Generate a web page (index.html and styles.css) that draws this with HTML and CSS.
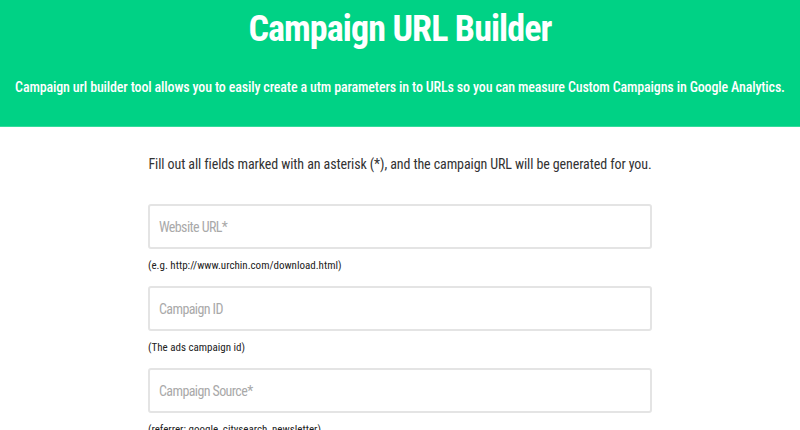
FILE: index.html
```html
<!DOCTYPE html>
<html>
<head>
<meta charset="utf-8">
<link rel="stylesheet" href="styles.css">
</head>
<body>
<header class="hero">
  <h1 class="hero-title">Campaign URL Builder</h1>
  <p class="hero-sub">Campaign url builder tool allows you to easily create a utm parameters in to URLs so you can measure Custom Campaigns in Google Analytics.</p>
</header>
<main class="form-wrap">
  <p class="intro"><span>Fill out all fields marked with an asterisk (*), and the campaign URL will be generated for you.</span></p>
  <div class="field">
    <input class="field-input" type="text" placeholder="Website URL*">
    <div class="field-help">(e.g. http://www.urchin.com/download.html)</div>
  </div>
  <div class="field">
    <input class="field-input" type="text" placeholder="Campaign ID">
    <div class="field-help">(The ads campaign id)</div>
  </div>
  <div class="field">
    <input class="field-input" type="text" placeholder="Campaign Source*">
    <div class="field-help">(referrer: google, citysearch, newsletter)</div>
  </div>
</main>
</body>
</html>
```
FILE: styles.css
```css
html, body {
  margin: 0;
  padding: 0;
  background: #fff;
  font-family: Roboto, "Liberation Sans", sans-serif;
  font-stretch: condensed;
}
.hero {
  background: #00d285;
  color: #fff;
  text-align: center;
  height: 127px;
  box-sizing: border-box;
  padding-top: 8px;
  border-bottom: 1px solid #33dc9c;
}
.hero-title {
  margin: 0;
  font-size: 36px;
  font-weight: 700;
  line-height: 42px;
  letter-spacing: -0.9px;
}
.hero-sub {
  margin: 28px 0 0;
  font-size: 14px;
  font-weight: 500;
  line-height: 18px;
  letter-spacing: -0.15px;
}
.form-wrap {
  width: 504px;
  margin: 0 auto;
  padding-top: 28px;
}
.intro {
  display: flex;
  justify-content: center;
  white-space: nowrap;
  margin: 0 0 31px;
  font-size: 14px;
  line-height: 18px;
  color: #333;
  letter-spacing: -0.1px;
}
.field {
  margin-bottom: 14px;
}
.field-input {
  display: block;
  width: 100%;
  height: 45px;
  box-sizing: border-box;
  border: 2px solid #e4e4e4;
  border-radius: 3px;
  padding: 0 9px;
  font-family: Roboto, "Liberation Sans", sans-serif;
  font-stretch: condensed;
  font-size: 14px;
  letter-spacing: -0.6px;
  color: #333;
  outline: none;
}
.field-input::placeholder {
  color: #a9a9a9;
}
.field-help {
  margin-top: 10px;
  font-size: 11px;
  line-height: 13px;
  color: #222;
  letter-spacing: 0;
}
```
